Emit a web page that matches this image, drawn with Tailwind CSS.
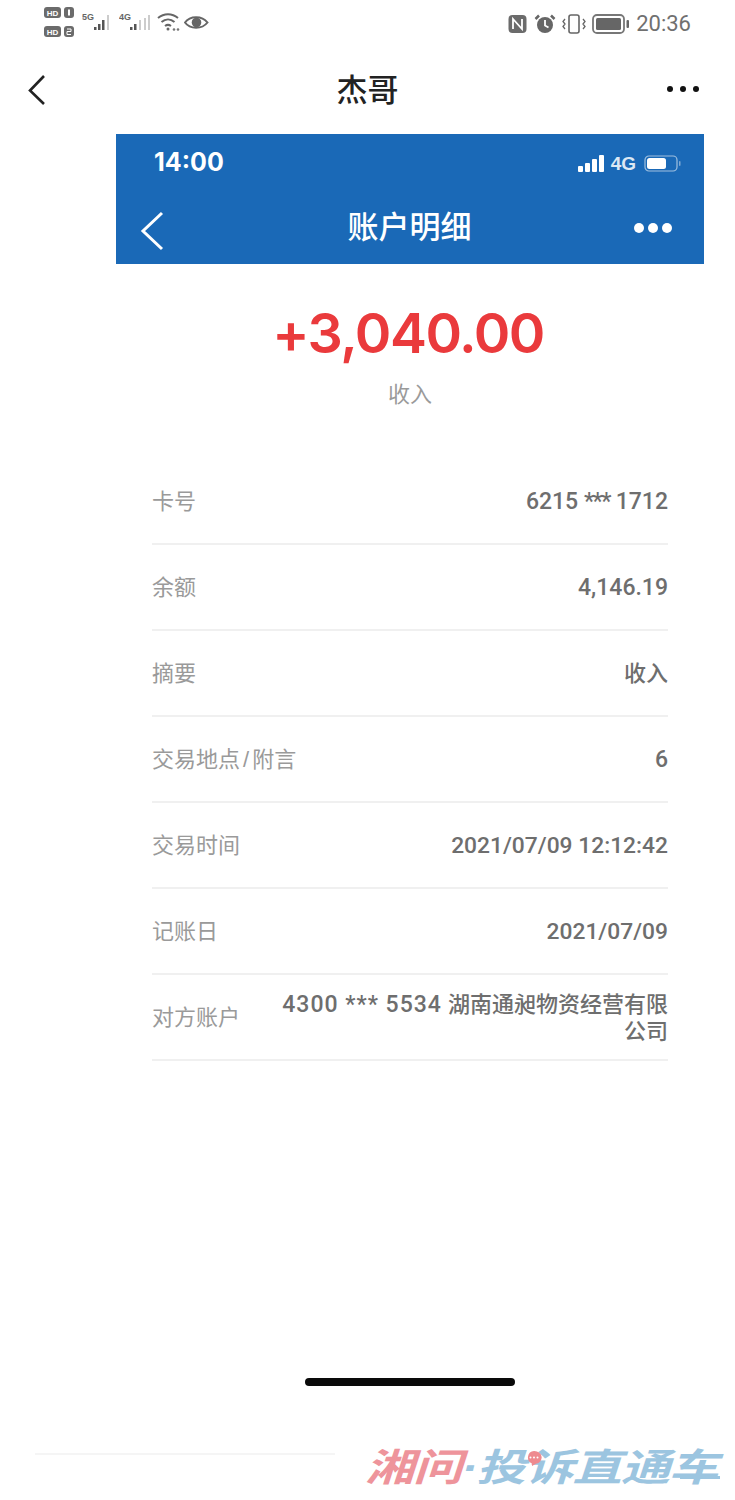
<!DOCTYPE html>
<html lang="zh"><head><meta charset="utf-8">
<script src="https://cdn.jsdelivr.net/npm/@tailwindcss/browser@4"></script>
</head>
<body class="bg-white">
<div class="relative w-[735px] h-[1500px] overflow-hidden bg-white font-['Liberation_Sans','Noto_Sans_CJK_SC',sans-serif]">
  <!-- phone status bar -->
  <div class="h-[48px] flex items-start justify-between pl-[44px] pr-[44px] pt-[5px] text-[#666]">
    <div class="flex items-start">
      <div class="flex flex-col gap-[6px] w-[32px] pt-[1px]">
        <svg width="31" height="13" viewBox="0 0 31 13"><rect x="0" y="1" width="17" height="11" rx="3" fill="#6b6b6b"/><text x="8.5" y="10" text-anchor="middle" font-size="8" font-weight="700" fill="#fff" font-family="Liberation Sans">HD</text><rect x="20" y="1" width="10" height="11" rx="3" fill="#6b6b6b"/><rect x="24" y="3.5" width="2" height="6" fill="#fff"/></svg>
        <svg width="31" height="13" viewBox="0 0 31 13"><rect x="0" y="1" width="17" height="11" rx="3" fill="#6b6b6b"/><text x="8.5" y="10" text-anchor="middle" font-size="8" font-weight="700" fill="#fff" font-family="Liberation Sans">HD</text><rect x="20" y="1" width="10" height="11" rx="3" fill="#6b6b6b"/><path d="M23 4h4v2.500h-4v3h4" stroke="#fff" fill="none"/></svg>
      </div>
      <svg class="ml-[6px] mt-[6px]" width="32" height="22" viewBox="0 0 32 22"><text x="0" y="9" font-size="9" font-weight="700" fill="#666" font-family="Liberation Sans">5G</text><rect x="12" y="16" width="2.500" height="3" fill="#555"/><rect x="16" y="13" width="2.500" height="6" fill="#555"/><rect x="20" y="9" width="2.500" height="10" fill="#555"/><rect x="25" y="4" width="2" height="15" fill="#ccc"/></svg>
      <svg class="ml-[5px] mt-[6px]" width="34" height="22" viewBox="0 0 34 22"><text x="0" y="9" font-size="9" font-weight="700" fill="#666" font-family="Liberation Sans">4G</text><rect x="11" y="16" width="2.500" height="3" fill="#555"/><rect x="15" y="13" width="2.500" height="6" fill="#555"/><rect x="20" y="9" width="2" height="10" fill="#ccc"/><rect x="25" y="7" width="2" height="12" fill="#ccc"/><rect x="29" y="4" width="2" height="15" fill="#ccc"/></svg>
      <svg class="ml-[3px] mt-[6px]" width="26" height="22" viewBox="0 0 26 22" fill="none" stroke="#666" stroke-width="2"><path d="M2 7c6-5 14-5 20 0"/><path d="M5.500 11c4-3.500 9-3.500 13 0"/><path d="M9 15c2-1.500 4-1.500 6 0"/><circle cx="12" cy="18" r="1.500" fill="#666" stroke="none"/><circle cx="18" cy="18.500" r="1.300" fill="#777" stroke="none"/><circle cx="22" cy="18.500" r="1.300" fill="#777" stroke="none"/></svg>
      <svg class="ml-[2px] mt-[9px]" width="25" height="18" viewBox="0 0 25 18"><path d="M1 8.500C6 1.500 18 1.500 23.500 8.500C18 15.500 6 15.500 1 8.500Z" fill="none" stroke="#666" stroke-width="2"/><circle cx="12.500" cy="8.500" r="4.800" fill="#666"/></svg>
    </div>
    <div class="flex items-center mt-[8px]">
      <svg width="19" height="20" viewBox="0 0 19 20"><rect x="0.500" y="1" width="18" height="18" rx="4" fill="#6b6b6b"/><path d="M5 15V5l9 10V5" stroke="#fff" stroke-width="1.800" fill="none"/></svg>
      <svg class="ml-[7px]" width="22" height="22" viewBox="0 0 22 22"><circle cx="11" cy="12" r="8" fill="#666"/><path d="M1.500 6 5 2.500M20.500 6 17 2.500" stroke="#666" stroke-width="2.500"/><path d="M11 7v5.500l3.500 2" stroke="#fff" stroke-width="1.800" fill="none"/></svg>
      <svg class="ml-[6px]" width="24" height="22" viewBox="0 0 24 22" fill="none" stroke="#666" stroke-width="1.600"><rect x="7" y="2" width="10" height="18" rx="2"/><path d="M3 6l-2 2.500 2 2.500-2 2.500 2 2.500M21 6l2 2.500-2 2.500 2 2.500-2 2.500" stroke-width="1.300"/></svg>
      <svg class="ml-[6px]" width="38" height="20" viewBox="0 0 38 20"><rect x="1" y="1" width="31" height="18" rx="4" fill="none" stroke="#777" stroke-width="1.800"/><rect x="4" y="4" width="25" height="12" rx="1.500" fill="#666"/><rect x="34.500" y="6" width="2.500" height="8" rx="1" fill="#666"/></svg>
      <span class="ml-[6px] text-[22px] leading-none text-[#707070] font-['Roboto']">20:36</span>
    </div>
  </div>
  <!-- chat nav -->
  <div class="relative h-[86px] flex items-center justify-center">
    <svg class="absolute left-[27px] top-[26px]" width="20" height="32" viewBox="0 0 20 32" fill="none" stroke="#222" stroke-width="2.600"><path d="M17 2 3 16.500 17 30"/></svg>
    <span class="text-[31px] leading-none font-medium text-[#222] -mt-[1px]">杰哥</span>
    <div class="absolute left-[667px] top-[38px] flex gap-[7px]"><i class="size-[6px] rounded-full bg-[#111]"></i><i class="size-[6px] rounded-full bg-[#111]"></i><i class="size-[6px] rounded-full bg-[#111]"></i></div>
  </div>
  <!-- screenshot within the chat -->
  <div class="ml-[116px] w-[588px] h-[130px] bg-[#1a69b7] text-white">
    <div class="h-[57px] flex items-center justify-between pl-[38px] pr-[22px]">
      <span class="text-[25px] font-bold leading-none font-['Inter']">14:00</span>
      <div class="flex items-center gap-[4px] mt-[1px]">
        <svg width="30" height="17" viewBox="0 0 30 17"><rect x="1" y="11" width="5" height="6" rx="1" fill="#fff"/><rect x="8" y="8" width="5" height="9" rx="1" fill="#fff"/><rect x="15" y="4" width="5" height="13" rx="1" fill="#fff"/><rect x="22" y="0" width="5" height="17" rx="1" fill="#fff"/></svg>
        <span class="text-[19px] leading-none font-bold text-[#dce8f4]">4G</span>
        <svg class="ml-[4px]" width="38" height="17" viewBox="0 0 38 17"><rect x="1" y="1" width="32" height="15" rx="4" fill="none" stroke="#9fc0e0" stroke-width="1.200"/><rect x="3" y="3" width="19" height="11" rx="2.500" fill="#fff"/><rect x="35" y="6" width="1.500" height="5" rx="1" fill="#7fa9d4"/></svg>
      </div>
    </div>
    <div class="relative h-[73px] flex items-center justify-center">
      <svg class="absolute left-[24px] top-[20px]" width="26" height="40" viewBox="0 0 26 40" fill="none" stroke="#fff" stroke-width="3"><path d="M22 2 3 20l19 18"/></svg>
      <span class="text-[31px] leading-none font-medium text-white -mt-[1px] -ml-[1px]">账户明细</span>
      <div class="absolute left-[518px] top-[32px] flex gap-[4px]"><i class="size-[10px] rounded-full bg-white"></i><i class="size-[10px] rounded-full bg-white"></i><i class="size-[10px] rounded-full bg-white"></i></div>
    </div>
  </div>
  <!-- amount -->
  <div class="ml-[116px] w-[588px] flex flex-col items-center pt-[35px]">
    <div class="text-[55.500px] leading-[68px] font-semibold text-[#ea3a3c] font-['Inter'] tracking-[-1.500px] w-full text-center pr-[4px]">+3,040.00</div>
    <div class="mt-[13px] text-[22px] leading-[30px] text-[#9a9a9a]">收入</div>
  </div>
  <!-- rows -->
  <div class="ml-[152px] w-[516px] mt-[49px] text-[22px] text-[#9a9a9a]">
    <div class="h-[86px] flex items-center justify-between border-b-2 border-[#f0f0f0]"><span>卡号</span><span class="mt-[2px] font-medium text-[#6e6e6e] text-[23px] font-['Roboto']">6215 <span class="tracking-[-1.500px]">***</span> 1712</span></div>
    <div class="h-[86px] flex items-center justify-between border-b-2 border-[#f0f0f0]"><span>余额</span><span class="mt-[2px] font-medium text-[#6e6e6e] text-[23px] font-['Roboto']">4,146.19</span></div>
    <div class="h-[86px] flex items-center justify-between border-b-2 border-[#f0f0f0]"><span>摘要</span><span class="font-medium text-[#6e6e6e]">收入</span></div>
    <div class="h-[86px] flex items-center justify-between border-b-2 border-[#f0f0f0]"><span>交易地点<span class="mx-[3px]">/</span>附言</span><span class="mt-[2px] font-medium text-[#6e6e6e] text-[23px] font-['Roboto']">6</span></div>
    <div class="h-[86px] flex items-center justify-between border-b-2 border-[#f0f0f0]"><span>交易时间</span><span class="mt-[2px] font-medium text-[#6e6e6e] text-[22.800px] font-['Roboto']">2021/07/09 12:12:42</span></div>
    <div class="h-[86px] flex items-center justify-between border-b-2 border-[#f0f0f0]"><span>记账日</span><span class="mt-[2px] font-medium text-[#6e6e6e] text-[22.800px] font-['Roboto']">2021/07/09</span></div>
    <div class="h-[86px] flex items-center justify-between border-b-2 border-[#f0f0f0]"><span class="shrink-0">对方账户</span><span class="mt-[2px] font-medium text-[#6e6e6e] text-right leading-[27px] w-[390px]"><span class="text-[23px] font-['Roboto'] tracking-[1px]">4300 *** 5534</span> <span>湖南通昶物资经营有限公司</span></span></div>
  </div>
  <!-- home bar -->
  <div class="absolute left-[305px] top-[1378px] w-[210px] h-[8px] rounded-full bg-[#0a0a0a]"></div>
  <!-- watermark -->
  <div class="absolute left-[35px] top-[1453px] w-[300px] h-[2px] bg-[#f5f5f5]"></div>
  <div class="absolute left-[365px] top-[1447px] flex items-center text-[38px] leading-[42px] font-bold italic tracking-[-1px] whitespace-nowrap origin-left scale-x-[1.3]">
    <span class="text-[#ee949b]">湘问</span><span class="text-[#9cc5e0]">·投诉直通车</span>
  </div>
  <div class="absolute left-[680px] top-[1476px] w-[40px] h-[3px] bg-[#9cc5e0]"></div>
  <svg class="absolute left-[525px] top-[1451px]" width="18" height="15" viewBox="0 0 18 15"><path d="M9 0a7.500 6.500 0 0 1 2 12.800L7 15v-2.500A6.500 6.500 0 0 1 9 0Z" fill="#ee8a8f"/><circle cx="5.500" cy="6.500" r="1" fill="#fff"/><circle cx="9" cy="6.500" r="1" fill="#fff"/><circle cx="12.500" cy="6.500" r="1" fill="#fff"/></svg>
</div>
</body></html>
